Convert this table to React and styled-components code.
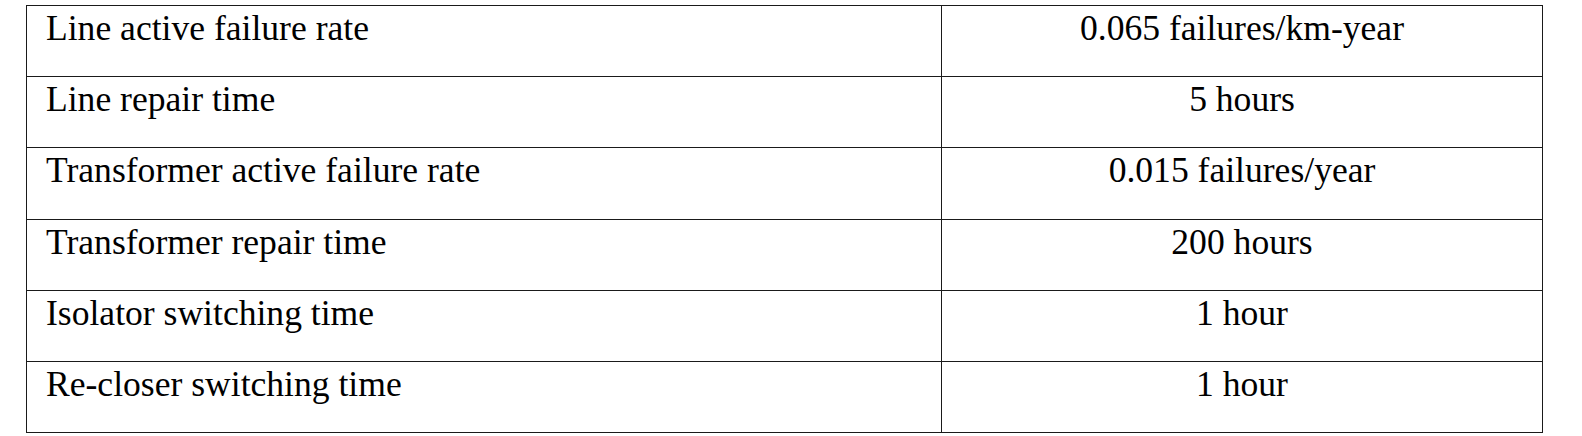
import React from 'react'
import styled, { createGlobalStyle } from 'styled-components'

const GlobalStyle = createGlobalStyle`
  html, body {
    margin: 0;
    padding: 0;
    background: #fff;
  }
`

const Page = styled.div`
  padding: 5px 0 0 26px;
  font-family: 'Liberation Serif', 'Times New Roman', serif;
  color: #000;
`

const Table = styled.table`
  width: 1516px;
  border-collapse: collapse;
  table-layout: fixed;
`

const Row = styled.tr`
  height: 71.2px;
`

const Cell = styled.td`
  border: 1.5px solid #1a1a1a;
  padding: 3px 19px 0 19px;
  vertical-align: top;
  font-size: 35.6px;
  line-height: 39px;
  text-align: ${p => (p.$center ? 'center' : 'left')};
`

const params = [
  ['Line active failure rate', '0.065 failures/km-year'],
  ['Line repair time', '5 hours'],
  ['Transformer active failure rate', '0.015 failures/year'],
  ['Transformer repair time', '200 hours'],
  ['Isolator switching time', '1 hour'],
  ['Re-closer switching time', '1 hour']
]

const App = () => (
  <Page>
    <GlobalStyle />
    <Table>
      <colgroup>
        <col style={{ width: 915 }} />
        <col style={{ width: 601 }} />
      </colgroup>
      <tbody>
        {params.map(([name, value]) => (
          <Row key={name}>
            <Cell>{name}</Cell>
            <Cell $center>{value}</Cell>
          </Row>
        ))}
      </tbody>
    </Table>
  </Page>
)

export default App
